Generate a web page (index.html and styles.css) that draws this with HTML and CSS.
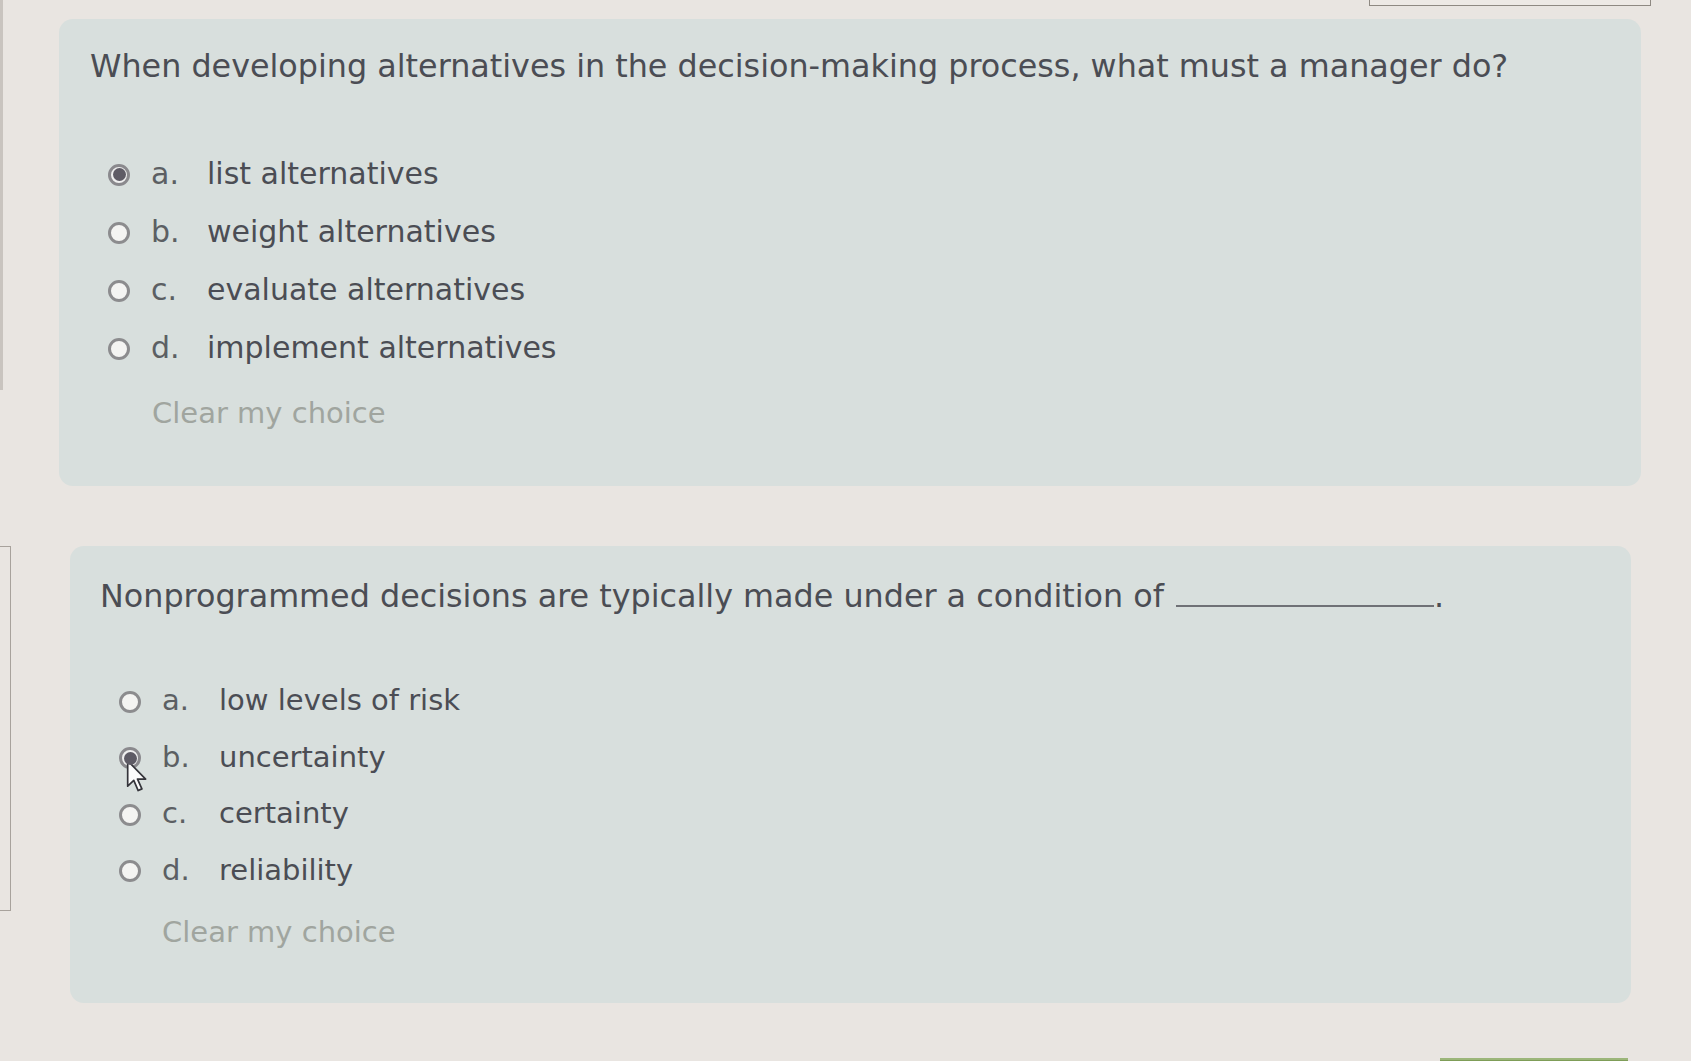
FILE: index.html
```html
<!DOCTYPE html>
<html lang="en">
<head>
<meta charset="utf-8">
<title>Quiz</title>
<link rel="stylesheet" href="styles.css">
</head>
<body>
<div class="page">
  <div class="topbar"><div class="top-button"></div></div>

  <section class="card card-one">
    <p class="question">When developing alternatives in the decision-making process, what must a manager do?</p>
    <div class="answers">
      <div class="answer"><span class="radio checked"></span><span class="letter">a.</span><span class="text">list alternatives</span></div>
      <div class="answer"><span class="radio"></span><span class="letter">b.</span><span class="text">weight alternatives</span></div>
      <div class="answer"><span class="radio"></span><span class="letter">c.</span><span class="text">evaluate alternatives</span></div>
      <div class="answer"><span class="radio"></span><span class="letter">d.</span><span class="text">implement alternatives</span></div>
    </div>
    <div class="clear">Clear my choice</div>
  </section>

  <div class="row-two">
    <div class="side-stub"></div>
    <section class="card card-two">
      <p class="question">Nonprogrammed decisions are typically made under a condition of <span class="blank"></span>.</p>
      <div class="answers">
        <div class="answer"><span class="radio"></span><span class="letter">a.</span><span class="text">low levels of risk</span></div>
        <div class="answer"><span class="radio checked"><svg class="cursor" width="22" height="34" viewBox="0 0 13 20"><path d="M1 1 L1 16 L4.6 12.6 L7.2 18.6 L9.4 17.6 L6.8 11.8 L11.6 11.8 Z" fill="#fbfbfb" stroke="#34343a" stroke-width="1" stroke-linejoin="round"/></svg></span><span class="letter">b.</span><span class="text">uncertainty</span></div>
        <div class="answer"><span class="radio"></span><span class="letter">c.</span><span class="text">certainty</span></div>
        <div class="answer"><span class="radio"></span><span class="letter">d.</span><span class="text">reliability</span></div>
      </div>
      <div class="clear">Clear my choice</div>
    </section>
  </div>

  <div class="bottombar"><div class="next-button"></div></div>
</div>
</body>
</html>
```
FILE: styles.css
```css
html, body {
  margin: 0;
  padding: 0;
  height: 100%;
  overflow: hidden;
}
body {
  background: #e9e5e1;
  font-family: "DejaVu Sans", "Liberation Sans", sans-serif;
  color: #4b4d54;
}
.page {
  width: 1691px;
  height: 1061px;
  display: flex;
  flex-direction: column;
  background: linear-gradient(to right, #c9c4bf 0, #c9c4bf 3px, transparent 3px) no-repeat 0 0 / 3px 390px;
}
.page > * {
  flex: none;
}
.topbar {
  height: 6px;
  display: flex;
}
.top-button {
  margin-left: 1369px;
  width: 280px;
  height: 5px;
  border: 1.5px solid #8e8982;
  border-top: none;
  background: #ede9e5;
}
.card {
  background: #d8dfdd;
  border-radius: 14px;
  box-sizing: border-box;
}
.card-one {
  margin: 13px 0 0 59px;
  width: 1582px;
  height: 467px;
  padding: 29px 0 0 31px;
}
.question {
  margin: 0;
  font-size: 31.8px;
  line-height: 36px;
  white-space: nowrap;
}
.answers {
  margin-top: 60px;
  margin-left: 18px;
}
.answer {
  display: flex;
  align-items: center;
  height: 58px;
  font-size: 30px;
}
.radio {
  position: relative;
  width: 16px;
  height: 16px;
  border-radius: 50%;
  border: 3px solid #8c8c8e;
  background: #f4f4f2;
  flex: none;
  margin-top: 3px;
}
.radio.checked {
  background: #efefef;
  border-color: #8a898d;
}
.radio.checked::after {
  content: "";
  position: absolute;
  left: 1.5px;
  top: 1.5px;
  width: 13px;
  height: 13px;
  border-radius: 50%;
  background: #5e5b65;
}
.letter {
  width: 56px;
  margin-left: 21px;
  color: #5c5f63;
  flex: none;
}
.text {
  white-space: nowrap;
}
.clear {
  margin-top: 9px;
  margin-left: 62px;
  font-size: 29px;
  line-height: 57px;
  color: #a0a59f;
}
.row-two {
  display: flex;
  align-items: flex-start;
  margin-top: 60px;
}
.side-stub {
  width: 10px;
  height: 363px;
  border: 1.5px solid #a8a29c;
  border-left: none;
  flex: none;
}
.card-two {
  margin-left: 59px;
  width: 1561px;
  height: 457px;
  padding: 31px 0 0 30px;
}
.card-two .answers {
  margin-top: 58px;
  margin-left: 19px;
}
.card-two .answer { height: 56.5px; font-size: 29px; }
.card-two .letter { width: 57px; }
.card-two .clear { margin-top: 6px; margin-left: 62px; font-size: 29px; }
.blank {
  display: inline-block;
  width: 258px;
  height: 28px;
  border-bottom: 2px solid #6f7176;
  margin-left: 2px;
  vertical-align: baseline;
}
.cursor {
  position: absolute;
  left: 4px;
  top: 9px;
}
.bottombar {
  display: flex;
  margin-top: 55px;
}
.next-button {
  margin-left: 1440px;
  width: 188px;
  height: 12px;
  background: #7f9d58;
  border-top: 2px solid #9cb67a;
}
```
